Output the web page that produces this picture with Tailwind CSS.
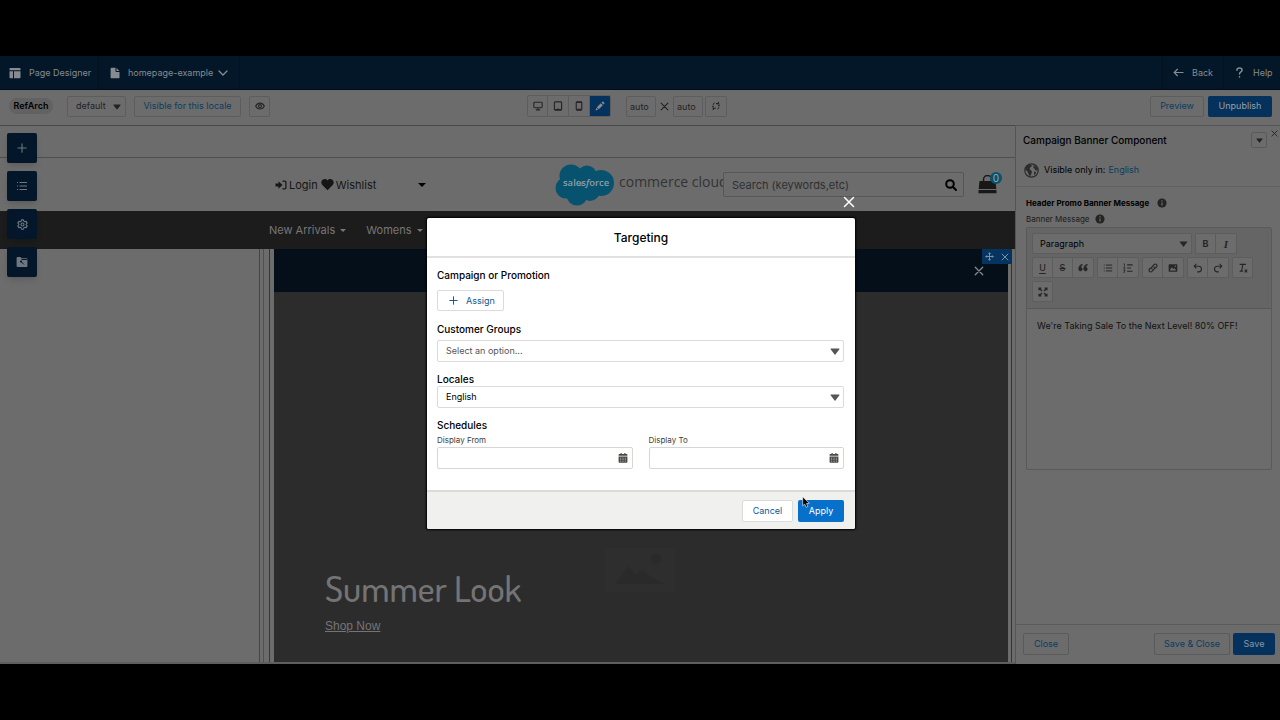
<!DOCTYPE html>
<html lang="en">
<head>
<meta charset="utf-8">
<title>Page Designer</title>
<script src="https://cdn.jsdelivr.net/npm/@tailwindcss/browser@4"></script>
</head>
<body class="bg-black">
<svg class="hidden">
  <symbol id="x" viewBox="0 0 12 12"><path d="M1.5 1.5l9 9m0-9l-9 9" fill="none" stroke="currentColor" stroke-width="1.5" stroke-linecap="round"/></symbol>
  <symbol id="plus" viewBox="0 0 12 12"><path d="M6 1v10M1 6h10" fill="none" stroke="currentColor" stroke-width="1.3" stroke-linecap="round"/></symbol>
  <symbol id="down" viewBox="0 0 10 7"><path d="M1 .5h8a.5.5 0 0 1 .4.8L5.4 6.4a.5.5 0 0 1-.8 0L.6 1.300A.5.5 0 0 1 1 .5z" fill="currentColor"/></symbol>
  <symbol id="list" viewBox="0 0 12 12"><path d="M3.500 2.500H11M3.500 6H11M3.500 9.500H11M1 2.500h1M1 6h1M1 9.500h1" fill="none" stroke="currentColor" stroke-width="1.200"/></symbol>
  <symbol id="info" viewBox="0 0 12 12"><circle cx="6" cy="6" r="5.500" fill="#242424"/><path d="M6 5.500V9M6 2.800v1.400" stroke="#6c6c6c" stroke-width="1.500"/></symbol>
  <symbol id="cal" viewBox="0 0 12 12"><path d="M3 0h1.400v1.200h3.200V0H9v1.200h1.500c.5 0 .8.3.8.8v1.200H.7V2c0-.5.3-.8.8-.8H3zM.7 4.200h10.600v6.600c0 .6-.4 1-1 1H1.700c-.6 0-1-.4-1-1z" fill="#4a4845"/><path d="M2.500 6.200h1.300m1.500 0h1.400m1.500 0h1.300M2.500 8h1.300m1.500 0h1.400m1.500 0h1.300M2.500 9.900h1.300m1.500 0h1.400m1.500 0h1.300" stroke="#d4d4d4" stroke-width=".8"/></symbol>
</svg>
<div class="relative flex min-h-screen flex-col py-14 font-[Inter,sans-serif] text-[9px] leading-4">

  <header class="flex h-[34px] shrink-0 items-stretch border-b border-[#020b18] bg-[#041729] text-[#858b91]">
    <a href="#" class="flex w-[99px] items-center gap-2 border-r border-[#03111f] pl-[9px] whitespace-nowrap">
      <svg class="size-3 shrink-0" viewBox="0 0 12 12" fill="currentColor"><path d="M1.500 1h9c.6 0 1 .4 1 1v1.200H.5V2c0-.6.400-1 1-1zM.5 4.200H4v7H1.500c-.6 0-1-.4-1-1zM5 4.200h6.500v6c0 .6-.4 1-1 1H5z"/></svg>Page Designer</a>
    <button class="flex w-[141px] items-center border-r border-[#03111f] pl-[10px] whitespace-nowrap">
      <svg class="mr-[7px] size-3 shrink-0" viewBox="0 0 12 12" fill="currentColor"><path d="M2.500.8H6.500v3.400c0 .5.300.8.800.8h3.200v5.400c0 .5-.4.9-.9.900H2.500c-.5 0-.9-.4-.9-.9V1.700c0-.5.4-.9.900-.9zM7.500.9l3 3.100h-3z"/></svg>homepage-example
      <svg class="ml-[5px] size-[10px] shrink-0" viewBox="0 0 10 10" fill="none" stroke="currentColor" stroke-width="1.300" stroke-linecap="round"><path d="M1 3l4 4 4-4"/></svg></button>
    <div class="ml-auto flex">
      <a href="#" class="flex w-[61px] items-center gap-2 border-l border-[#03111f] pl-[10px]"><svg class="size-[11px]" viewBox="0 0 12 12" fill="none" stroke="currentColor" stroke-width="1.300" stroke-linecap="round"><path d="M11 6H1.500M4.800 2.500L1.300 6l3.500 3.500"/></svg>Back</a>
      <a href="#" class="flex w-[57px] items-center gap-2 border-l border-[#03111f] pl-[10px]"><svg class="size-[11px]" viewBox="0 0 12 12" fill="none" stroke="currentColor" stroke-width="1.600" stroke-linecap="round"><path d="M3.200 3.600C3.200 2 4.400 1.200 6 1.200s2.800 1 2.800 2.300C8.800 5.300 6 5.500 6 7.600M6 10.600v.2"/></svg>Help</a>
    </div>
  </header>

  <div class="grid h-[35px] shrink-0 grid-cols-[1fr_auto_1fr] items-center bg-[#6c6c6c] px-2 pb-[3px] text-[#222]">
    <div class="flex items-center">
      <span class="ml-px flex w-11 justify-center rounded-full bg-[#626262] font-semibold text-black">RefArch</span>
      <div class="relative ml-[14px]">
        <select aria-label="Variant" class="h-[21px] w-[59px] appearance-none rounded-xs border border-[#5d5d5d] pl-2"><option>default</option></select>
        <svg class="pointer-events-none absolute top-2 right-[5px] h-[6px] w-2 text-[#222]"><use href="#down"/></svg>
      </div>
      <button class="ml-2 h-[21px] w-[107px] rounded-xs border border-[#5d5d5d] text-[#0b3c60]">Visible for this locale</button>
      <button aria-label="Preview visibility" class="ml-2 flex h-[21px] w-[21px] items-center justify-center rounded-xs border border-[#5d5d5d]"><svg class="size-[10px]" viewBox="0 0 12 12" fill="none" stroke="#262626"><path d="M.8 6C2 3.600 3.800 2.500 6 2.500S10 3.600 11.200 6C10 8.400 8.200 9.500 6 9.500S2 8.400.8 6z" stroke-width="1.300"/><circle cx="6" cy="6" r="1.700" stroke-width="1.300"/></svg></button>
    </div>
    <div class="flex items-center pr-[26px]">
      <div class="flex h-[22px] divide-x divide-[#5d5d5d] overflow-hidden rounded-xs border border-[#5d5d5d] text-[#262626]">
        <button aria-label="Desktop" class="flex w-5 items-center justify-center"><svg class="size-[10px]" viewBox="0 0 12 12" fill="none" stroke="currentColor" stroke-width="1.300"><rect x="1" y="1.500" width="10" height="6.500" rx="1"/><path d="M6 8v2.500M3.500 10.600h5"/></svg></button>
        <button aria-label="Tablet" class="flex w-[21px] items-center justify-center"><svg class="size-[10px]" viewBox="0 0 12 12"><rect x="1.700" y="1" width="8.600" height="10" rx="1" fill="none" stroke="currentColor" stroke-width="1.400"/><path d="M2 9.600h3v-.6h2v.6h3v1.400H2z" fill="currentColor"/></svg></button>
        <button aria-label="Phone" class="flex w-[21px] items-center justify-center"><svg class="size-[10px]" viewBox="0 0 12 12"><rect x="2.700" y="1" width="6.600" height="10" rx="1" fill="none" stroke="currentColor" stroke-width="1.400"/><path d="M3 9.200h6V11H3zM3 1h6v1.500H3z" fill="currentColor"/></svg></button>
        <button aria-label="Custom size" class="flex w-5 items-center justify-center bg-[#05325c]"><svg class="size-[10px]" viewBox="0 0 12 12" fill="#858b91"><path d="M.7 11.300l.8-3.100 2.300 2.300zM2.200 7.400l4.800-4.800 2.400 2.400-4.800 4.800zM7.800 1.800l.9-.9c.4-.4.9-.4 1.300 0l1.100 1.100c.4.4.4.900 0 1.300l-.9.9z"/></svg></button>
      </div>
      <input aria-label="Width" value="auto" class="ml-[15px] h-[21px] w-[30px] rounded-xs border border-[#5d5d5d] pl-[3px]">
      <svg class="mx-[4px] size-[9px] text-[#222]"><use href="#x"/></svg>
      <input aria-label="Height" value="auto" class="h-[21px] w-[30px] rounded-xs border border-[#5d5d5d] pl-[3px]">
      <button aria-label="Rotate" class="ml-[2px] flex h-[21px] w-[22px] items-center justify-center rounded-xs border border-[#5d5d5d]"><svg class="size-[10px]" viewBox="0 0 12 12"><path d="M6 3.200h3V1.200M2.800 10.800V8.700h3" fill="none" stroke="#222" stroke-width="1.400"/><path d="M8 4.500h3L9.500 7zM1 7.500h3L2.500 5z" fill="#222"/><path d="M9.500 7.500L8 10M2.500 4.500L4 2" stroke="#222" stroke-width="1.200"/></svg></button>
    </div>
    <div class="flex justify-end gap-1">
      <button class="h-[21px] w-[54px] rounded-xs border border-[#5d5d5d] text-[#0b3c60]">Preview</button>
      <button class="h-[21px] w-16 rounded-xs bg-[#05325c] text-[#9a9fa5]">Unpublish</button>
    </div>
  </div>

  <div class="flex flex-1 items-stretch bg-[#6c6c6c]">
    <main class="relative flex min-w-0 flex-1 flex-col border-t border-[#484848]">
      <aside class="absolute top-[7px] left-[7px] z-10 flex flex-col gap-2 text-[#6f7880]">
        <button aria-label="Add component" class="flex size-[30px] items-center justify-center rounded-xs bg-[#04162a] shadow-md"><svg class="size-[10px]"><use href="#plus"/></svg></button>
        <button aria-label="Outline" class="flex size-[30px] items-center justify-center rounded-xs bg-[#04162a] shadow-md"><svg class="size-3"><use href="#list"/></svg></button>
        <button aria-label="Settings" class="flex size-[30px] items-center justify-center rounded-xs bg-[#04162a] shadow-md"><svg class="size-[11px]" viewBox="0 0 12 12" fill="none" stroke="currentColor" stroke-width="1.200" stroke-linejoin="round"><path d="M4.900.9h2.200l.4 1.500 1 .6 1.500-.4 1.100 1.900L10 5.600v.8l1.100 1.100L10 9.400 8.500 9l-1 .6-.4 1.500H4.900l-.4-1.500-1-.6-1.500.4L.9 7.500 2 6.400v-.8L.9 4.500 2 2.600l1.500.4 1-.6z"/><circle cx="6" cy="6" r="1.600"/></svg></button>
        <button aria-label="Search pages" class="flex size-[30px] items-center justify-center rounded-xs bg-[#04162a] shadow-md"><svg class="size-3" viewBox="0 0 12 12"><path d="M1.500 1h3l1 1.300h5c.5 0 .9.400.9.900V10c0 .5-.4.9-.9.900h-9c-.5 0-.9-.4-.9-.9V1.900c0-.5.4-.9.900-.9z" fill="currentColor"/><path d="M5 5.500l3 3M5.500 3.500h5.500" stroke="#04162a" stroke-width="1"/><circle cx="5" cy="5.500" r="1.100" fill="#04162a"/></svg></button>
      </aside>

      <div class="h-8 shrink-0 border-b border-[#4f4f4f]"></div>
      <div class="flex h-[53px] shrink-0 items-center pl-[275px] text-[11px] text-[#161616]">
        <a href="#" class="flex items-center gap-[2px]"><svg class="size-3" viewBox="0 0 12 12" fill="#161616"><path d="M.5 4.500h3V2.200L7.500 6l-4 3.800V7.500h-3zM7.500 1.500h2.300c.9 0 1.700.8 1.700 1.700v5.600c0 .9-.8 1.700-1.700 1.700H7.500V9.300h2.300c.3 0 .5-.2.5-.5V3.200c0-.3-.2-.5-.5-.5H7.500z"/></svg>Login</a>
        <a href="#" class="ml-[3px] flex items-center gap-[2px]"><svg class="size-[13px]" viewBox="0 0 12 12" fill="#161616"><path d="M6 11.300L1.200 6.500C-.2 5 .1 2.700 1.600 1.600 3 .6 4.900.8 6 2.300 7.100.8 9 .6 10.400 1.600c1.500 1.100 1.800 3.400.4 4.900z"/></svg>Wishlist</a>
        <button aria-label="Change locale" class="ml-[42px]"><svg class="h-1 w-2" viewBox="0 0 8 4"><path d="M0 0h8L4 4z"/></svg></button>
        <a href="#" class="ml-auto flex shrink-0 items-center gap-1 text-[#333]">
          <svg class="h-[42px] w-[60px]" viewBox="0 0 60 42"><g fill="#07526e"><circle cx="16" cy="12" r="11.500"/><circle cx="32" cy="11" r="9.500"/><circle cx="46" cy="19" r="13"/><circle cx="11" cy="24" r="10.500"/><circle cx="22" cy="31" r="10.500"/><circle cx="35" cy="27" r="10"/></g><text x="8" y="22" font-family="Open Sans" font-size="9.500" fill="#8e9da4" font-weight="600">sales<tspan font-style="italic">f</tspan>orce</text></svg>
          <span class="w-[104px] pb-[5px] font-[Open_Sans] text-sm whitespace-nowrap">commerce cloud</span>
        </a>
        <div class="relative flex h-[25px] w-[241px] shrink-0 items-center rounded-xs border border-[#565656] bg-[#6c6c6c]">
          <input aria-label="Search" placeholder="Search (keywords,etc)" class="w-full pl-2 placeholder:text-[#2d3033]">
          <button aria-label="Search" class="absolute right-[6px]"><svg class="size-3" viewBox="0 0 12 12" fill="none" stroke="#000" stroke-width="2"><circle cx="5" cy="5" r="3.800"/><path d="M7.800 7.800L11 11" stroke-linecap="round"/></svg></button>
        </div>
        <a href="#" aria-label="Cart" class="relative mr-[13px] mb-1 ml-[14px] flex h-[22px] w-6 items-end">
          <svg class="h-[19px] w-[19px]" viewBox="0 0 19 19"><path d="M1.500 6h16l.8 8H.7zM.6 15h17.800l.2 3.300H.4z" fill="#181818"/><path d="M5.500 8V4.500a4 4 0 0 1 8 0V8" fill="none" stroke="#181818" stroke-width="1.500"/></svg>
          <span class="absolute top-0 right-0 flex size-3 items-center justify-center rounded-full bg-[#07526e] text-[10px] text-[#9aa]">0</span>
        </a>
      </div>
      <nav class="flex h-[38px] shrink-0 items-center gap-5 bg-[#1c1c1c] pl-[269px] text-[11px] text-[#777]">
        <a href="#" class="flex items-center gap-[5px]">New Arrivals <svg class="h-[3px] w-[6px]" viewBox="0 0 6 3"><path d="M0 0h6L3 3z" fill="#777"/></svg></a>
        <a href="#" class="flex items-center gap-[5px]">Womens <svg class="h-[3px] w-[6px]" viewBox="0 0 6 3"><path d="M0 0h6L3 3z" fill="#777"/></svg></a>
      </nav>
      <div class="flex flex-1 border-b-2 border-[#5e5e5e] pl-[259px]">
        <div class="flex w-[15px] shrink-0 gap-[3px]"><i class="border-r border-[#454545]"></i><i class="border-r border-[#505050]"></i><i class="ml-[2px] border-r border-[#203d55]"></i></div>
        <div class="relative flex flex-1 flex-col bg-[#2c2c2c]">
          <div class="flex h-[43px] items-center justify-end bg-[#040f1a] pr-6 text-[#858b91]"><button aria-label="Dismiss banner"><svg class="size-[10px]"><use href="#x"/></svg></button></div>
          <div class="absolute top-0 -right-[4px] flex h-[15px] w-[30px] items-center justify-around bg-[#063461] text-[#7f93a6]">
            <button aria-label="Move"><svg class="size-[9px]" viewBox="0 0 12 12" fill="none" stroke="currentColor" stroke-width="1.300"><path d="M6 1v10M1 6h10M4.500 2.500L6 1l1.500 1.500M4.500 9.500L6 11l1.500-1.500M2.500 4.500L1 6l1.500 1.500M9.500 4.500L11 6 9.500 7.500"/></svg></button>
            <button aria-label="Remove"><svg class="size-2"><use href="#x"/></svg></button>
          </div>
          <section class="relative flex flex-1 flex-col items-start justify-end pb-[26px] pl-[51px] text-[#747474]">
            <svg class="absolute bottom-[70px] left-[331px] h-11 w-[70px]" viewBox="0 0 70 44"><rect width="70" height="44" fill="#2e2e2e"/><path d="M11 36l12-18 8 9 6-5 8 6 14 8z" fill="#2a2a2a"/><circle cx="51" cy="11" r="5" fill="#2a2a2a"/></svg>
            <h1 class="font-[Dosis,'Liberation_Sans_Narrow',Lato,sans-serif] text-[36px] leading-[44px] font-medium">Summer Look</h1>
            <a href="#" class="mt-[6px] font-[Liberation_Sans] text-xs leading-[20px] underline">Shop Now</a>
          </section>
        </div>
        <div class="flex w-[7px] shrink-0 justify-center"><i class="border-r border-[#173a57]"></i></div>
      </div>
    </main>

    <aside class="flex w-[265px] shrink-0 flex-col border-t border-l border-[#555] text-black">
      <div class="relative flex h-[61px] flex-col border-b border-[#606060] pt-[6px]">
        <div class="flex items-center justify-between pr-[13px] pl-[7px]">
          <h2 class="text-[10px] font-medium leading-4">Campaign Banner Component</h2>
          <button aria-label="Component actions" class="flex size-4 items-center justify-center rounded-xs border border-[#5a5a5a] text-[#222]"><svg class="h-[5px] w-[7px]"><use href="#down"/></svg></button>
        </div>
        <button aria-label="Close panel" class="absolute top-1 right-[2px] text-[#222]"><svg class="size-[7px]"><use href="#x"/></svg></button>
        <p class="mt-[14px] flex items-center pl-2"><svg class="mr-[5px] size-[15px]" viewBox="0 0 15 15"><circle cx="7.500" cy="7.500" r="6.700" fill="none" stroke="#2c2c2c" stroke-width="1.200"/><path d="M2 4l3-2.500 3 .5-1 2-1.500 1 .5 1.500L8 8.500l-.500 2L6 13.500 4.500 11l-1-2.500L1.500 7zM9.500 2l3 2 1.300 3-1 .8-1.500-.8-.8-1.500L9.500 5zM10 8.500l2 .5-.5 2-1.500 1z" fill="#2c2c2c"/></svg>Visible only in:<a href="#" class="ml-[3px] text-[#0b3c60]">English</a></p>
      </div>
      <div class="flex flex-1 flex-col px-2 pt-[8px] pl-[10px] text-[8px]">
        <h3 class="flex items-center gap-2 font-bold">Header Promo Banner Message <svg class="size-[10px]"><use href="#info"/></svg></h3>
        <label for="msg" class="flex items-center gap-[5px] text-[#1a1a1a]">Banner Message <svg class="size-[10px]"><use href="#info"/></svg></label>
        <div class="flex h-[243px] flex-col rounded-xs border border-[#5a5a5a] text-[9px]">
          <div class="flex h-[81px] flex-wrap content-start gap-[3px] border-b border-[#575757] bg-[#656565] p-[5px] pr-0 text-[#262626]">
            <div class="relative"><select aria-label="Text style" class="h-[21px] w-[160px] appearance-none rounded-xs border border-[#5d5d5d] bg-[#6c6c6c] pl-[7px] text-black"><option>Paragraph</option></select><svg class="pointer-events-none absolute top-2 right-1 h-[6px] w-[9px]"><use href="#down"/></svg></div>
            <div class="mr-8 flex h-[21px] divide-x divide-[#5d5d5d] rounded-xs border border-[#5d5d5d] bg-[#6c6c6c]"><button class="w-5 font-bold">B</button><button class="w-5 font-[Liberation_Serif] text-[11px] font-bold italic">I</button></div>
            <div class="flex h-[21px] divide-x divide-[#5d5d5d] rounded-xs border border-[#5d5d5d] bg-[#6c6c6c]">
              <button class="w-5 font-medium underline underline-offset-2">U</button><button class="w-5 font-medium line-through">S</button>
              <button aria-label="Quote" class="flex w-5 items-center justify-center"><svg class="size-[10px]" viewBox="0 0 12 12" fill="currentColor"><path d="M5 1.500C2.500 2 .8 4 .8 7.500a2.200 2.200 0 1 0 2.400-2.300C3.500 4 4 3.200 5.300 2.700zM11 1.500C8.500 2 6.800 4 6.800 7.500a2.200 2.200 0 1 0 2.400-2.300c.3-1.200.8-2 2.100-2.500z" stroke="currentColor" stroke-width=".6"/></svg></button></div>
            <div class="flex h-[21px] divide-x divide-[#5d5d5d] rounded-xs border border-[#5d5d5d] bg-[#6c6c6c]">
              <button aria-label="Bulleted list" class="flex w-5 items-center justify-center"><svg class="size-[10px]"><use href="#list"/></svg></button>
              <button aria-label="Numbered list" class="flex w-5 items-center justify-center"><svg class="size-[10px]" viewBox="0 0 12 12" fill="none" stroke="currentColor"><path d="M5 2.200h6.500M5 6h4.500M5 9.800h6.500" stroke-width="1.300"/><path d="M.8 1h1v3M.5 5.200h2L.8 7.400h1.900M.6 8.800h1.800L1.500 10c1.500.2 1 1.600-.9 1.400" stroke-width=".9"/></svg></button></div>
            <div class="flex h-[21px] divide-x divide-[#5d5d5d] rounded-xs border border-[#5d5d5d] bg-[#6c6c6c]">
              <button aria-label="Link" class="flex w-5 items-center justify-center"><svg class="size-[10px]" viewBox="0 0 12 12" fill="none" stroke="currentColor" stroke-width="1.300" stroke-linecap="round"><path d="M5 7.300c-1-1-1-2 0-3L7.200 2c1-1 2.200-1 3 0s.8 2 0 2.800L9 6M7 4.700c1 1 1 2 0 3L4.800 10c-1 1-2.200 1-3 0s-.8-2 0-2.800L3 6"/></svg></button>
              <button aria-label="Image" class="flex w-5 items-center justify-center"><svg class="size-[10px]" viewBox="0 0 12 12"><rect x=".8" y="1.500" width="10.400" height="9" rx="1" fill="currentColor"/><path d="M2 9l2.500-4 2 2.300L7.700 6 10 9z" fill="#6c6c6c"/><circle cx="8.700" cy="3.900" r=".9" fill="#6c6c6c"/></svg></button></div>
            <div class="flex h-[21px] divide-x divide-[#5d5d5d] rounded-xs border border-[#5d5d5d] bg-[#6c6c6c]">
              <button aria-label="Undo" class="flex w-5 items-center justify-center"><svg class="size-[10px]" viewBox="0 0 12 12" fill="none" stroke="currentColor" stroke-width="1.300"><path d="M4 1L1.500 3.800 4 6.500M1.800 3.800h5a3.400 3.400 0 1 1 0 6.800H5"/></svg></button>
              <button aria-label="Redo" class="flex w-5 items-center justify-center"><svg class="size-[10px]" viewBox="0 0 12 12" fill="none" stroke="currentColor" stroke-width="1.300"><path d="M8 1l2.500 2.800L8 6.500M10.200 3.800h-5a3.400 3.400 0 1 0 0 6.800H7"/></svg></button></div>
            <button aria-label="Clear formatting" class="flex h-[21px] w-[21px] items-center justify-center rounded-xs border border-[#5d5d5d] bg-[#6c6c6c]"><svg class="size-[10px]" viewBox="0 0 12 12" fill="none" stroke="currentColor" stroke-width="1.300"><path d="M2 1.600h7.500M6 1.600L4.200 9.500M2 9.700h4M8 8l3 3.200M11 8l-3 3.200"/></svg></button>
            <button aria-label="Full screen" class="flex h-[21px] w-[21px] items-center justify-center rounded-xs border border-[#5d5d5d] bg-[#6c6c6c]"><svg class="size-[10px]" viewBox="0 0 12 12" fill="none" stroke="currentColor" stroke-width="1.500"><path d="M1.300 4V1.300H4M8 1.300h2.700V4M10.700 8v2.700H8M4 10.700H1.300V8M1.500 1.500l3.300 3.300M10.500 1.500L7.200 4.800M10.500 10.500L7.200 7.200M1.500 10.500l3.300-3.300"/></svg></button>
          </div>
          <textarea id="msg" class="flex-1 resize-none px-[10px] pt-[9px] leading-4 text-[#111]">We're Taking Sale To the Next Level! 80% OFF!</textarea>
        </div>
      </div>
      <footer class="flex h-10 items-center gap-[3px] border-t border-[#5b5b5b] pr-[5px] pb-px pl-[7px] text-[#0b3c60]">
        <button class="mr-auto h-[22px] w-[46px] rounded-xs border border-[#5a5a5a]">Close</button>
        <button class="h-[22px] w-[76px] rounded-xs border border-[#5a5a5a]">Save &amp; Close</button>
        <button class="h-[22px] w-[42px] rounded-xs bg-[#05325c] text-[#8a97a5]">Save</button>
      </footer>
    </aside>
  </div>

  <div role="dialog" aria-labelledby="dlg" class="absolute top-[218px] left-1/2 z-20 w-[428px] -translate-x-[213px] rounded-xs bg-white text-black shadow-[0_0_2px_1px_#000]">
    <button aria-label="Close" class="absolute -top-[22px] right-0 text-white"><svg class="size-3"><use href="#x"/></svg></button>
    <h2 id="dlg" class="flex h-10 items-center justify-center border-b-2 border-[#e2e1e0] pt-px text-xs font-medium">Targeting</h2>
    <form class="flex flex-col pt-[9px] pr-[11px] pb-[21px] pl-[10px]">
      <h3 class="text-[10px] font-medium">Campaign or Promotion</h3>
      <button type="button" class="mt-[7px] flex h-[21px] w-[67px] items-center gap-2 rounded-xs border border-[#dddbda] pl-[11px] text-[#0b5a94]"><svg class="size-[9px]"><use href="#plus"/></svg>Assign</button>
      <label for="grp" class="mt-[10px] text-[10px] font-medium">Customer Groups</label>
      <div class="relative mt-[3px]"><select id="grp" class="block h-[22px] w-full appearance-none rounded-xs border border-[#dddbda] pl-2 text-[#555]"><option>Select an option...</option></select><svg class="pointer-events-none absolute top-2 right-1 h-[7px] w-[10px] text-[#555]"><use href="#down"/></svg></div>
      <label for="loc" class="mt-[10px] text-[10px] leading-[14px] font-medium">Locales</label>
      <div class="relative"><select id="loc" class="block h-[22px] w-full appearance-none rounded-xs border border-[#dddbda] pl-2"><option>English</option></select><svg class="pointer-events-none absolute top-2 right-1 h-[7px] w-[10px] text-[#555]"><use href="#down"/></svg></div>
      <h3 class="mt-[9px] text-[10px] font-medium">Schedules</h3>
      <div class="grid grid-cols-2 gap-4 text-[8px] leading-[14px] text-[#3e3e3c]">
        <div class="relative"><label for="from" class="block">Display From</label><input id="from" class="block h-[22px] w-full rounded-xs border border-[#d8d6d4] px-2"><svg class="pointer-events-none absolute right-[5px] bottom-[6px] size-[10px]"><use href="#cal"/></svg></div>
        <div class="relative"><label for="to" class="block">Display To</label><input id="to" class="block h-[22px] w-full rounded-xs border border-[#d8d6d4] px-2"><svg class="pointer-events-none absolute right-[5px] bottom-[6px] size-[10px]"><use href="#cal"/></svg></div>
      </div>
    </form>
    <footer class="flex h-[39px] items-center justify-end gap-[5px] rounded-b-xs border-t-2 border-[#dddbda] bg-[#f0f0ef] pr-[11px]">
      <button class="h-[22px] w-[51px] rounded-xs border border-[#dddbda] bg-white text-[#0b5a94]">Cancel</button>
      <button class="h-[22px] w-[46px] rounded-xs bg-[#0770cb] text-white">Apply</button>
    </footer>
    <svg class="absolute right-[44px] bottom-[21px] h-3 w-[9px]" viewBox="0 0 9 12"><path d="M.7.8v9l2-1.700 1.400 3.200 1.700-.8-1.300-3 2.800-.2z" fill="#000" stroke="#fff" stroke-width=".6"/></svg>
  </div>
</div>
</body>
</html>
